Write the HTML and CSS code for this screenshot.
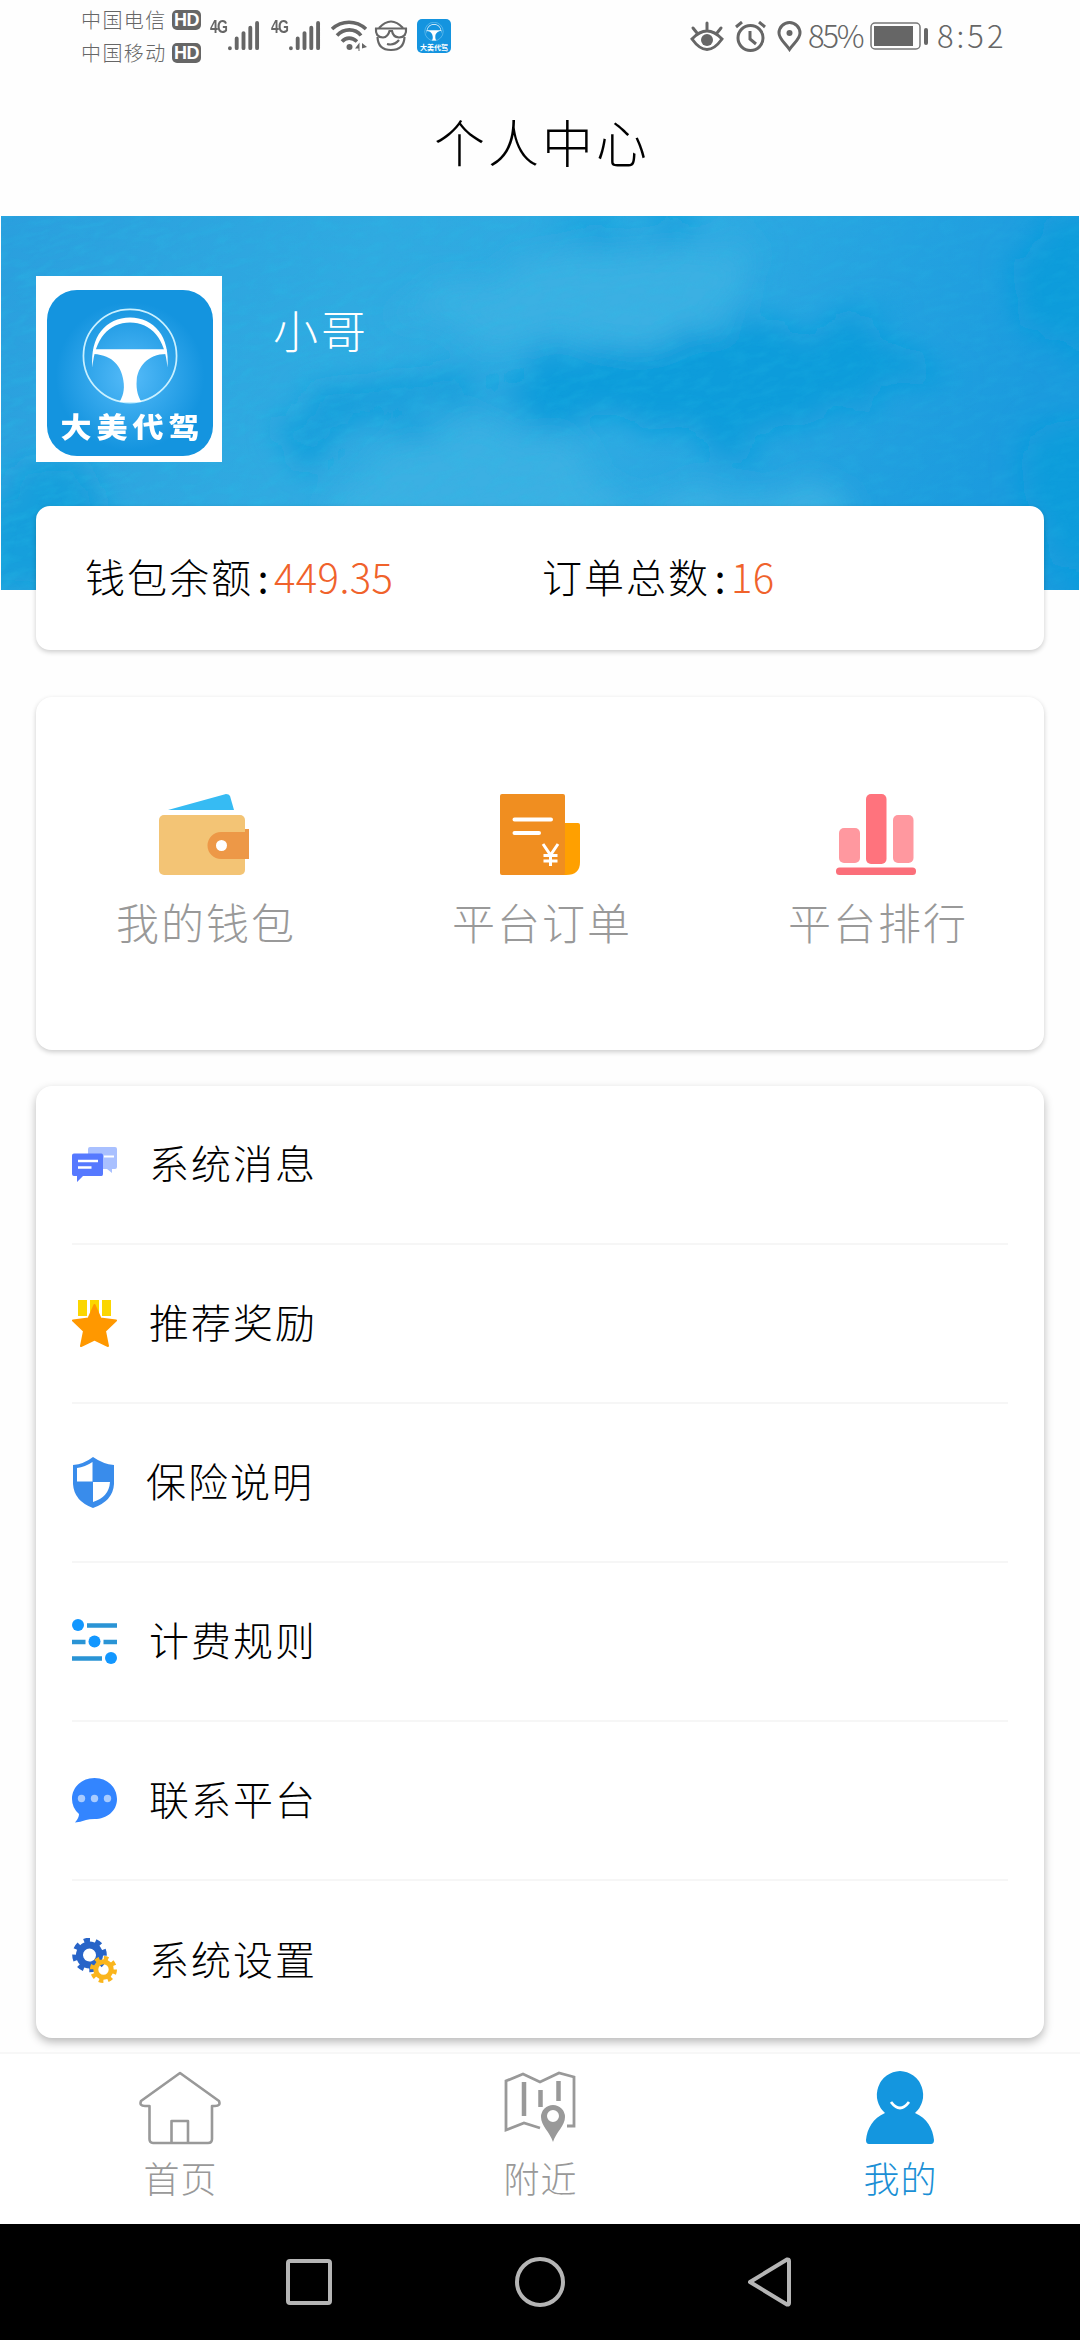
FILE: index.html
```html
<!DOCTYPE html>
<html lang="zh-CN">
<head>
<meta charset="utf-8">
<title>个人中心</title>
<link rel="stylesheet" href="styles.css">
</head>
<body>
<svg class="defs" width="0" height="0" aria-hidden="true">
  <defs>
    <symbol id="wheel" viewBox="0 0 100 100">
      <circle cx="50" cy="50" r="48.5" fill="none" stroke="#c9f0ff" stroke-width="1.8"/>
      <path d="M11 62C8 30 25 10 50 10s42 20 39 52C87 32 72 15 50 15S13 32 11 62Z" fill="#fff"/>
      <path d="M12 43H88V48C68 48 58 62 57 75 56 86 59 93 62 98H39C42 93 45 86 43 75 41 62 33 49 12 48Z" fill="#fff"/>
    </symbol>
    <symbol id="signal" viewBox="0 0 34 32">
      <path d="M3 28.5v.2M10 18.500v10M17 13v15.500M24 7.500v21M31 2.500v26" stroke="#666" stroke-width="4" stroke-linecap="round" fill="none"/>
    </symbol>
  </defs>
</svg>

<header class="status">
  <div class="carriers">
    <div class="carrier"><span>中国电信</span><b class="hd">HD</b></div>
    <div class="carrier"><span>中国移动</span><b class="hd">HD</b></div>
  </div>
  <span class="net net-a">4G</span><svg class="signal" width="33" height="32"><use href="#signal"/></svg>
  <span class="net net-b">4G</span><svg class="signal" width="33" height="32"><use href="#signal"/></svg>
  <svg class="wifi" width="38" height="32" viewBox="0 0 38 32" fill="none" stroke="#666" stroke-width="3.600">
    <path d="M2 9C12 0 26 0 36 9M7 15.500C14 8 25 8 31 15.500M12 21.500C16 17 22 17 27 21.500"/>
    <circle cx="19.500" cy="27" r="3" fill="#666" stroke="none"/>
    <path d="M29.500 22.500v8.500h-1v-2.500h-3.500l4.500-6M32 31v-8l5 4-5 1.500" fill="#666" stroke="none"/>
  </svg>
  <svg class="face" width="34" height="32" viewBox="0 0 34 32" fill="none" stroke="#666" stroke-width="2.200">
    <path d="M5 8Q17-5 29 8M3.500 17Q4 30 17 30T30.500 17M13 24Q20 26 25 20"/>
    <path d="M2 8.500H32Q33 17 25 17.500 19 17 18 11H15.500Q14 17 9 17.500 1 17 2 8.500Z"/>
  </svg>
  <div class="mini"><svg width="20" height="19"><use href="#wheel"/></svg><span>大美代驾</span></div>
  <svg class="eye" width="34" height="31" viewBox="0 0 34 31" fill="none" stroke="#666" stroke-width="3" stroke-linecap="round">
    <path d="M2 18Q17 2 32 18 17 39 2 18ZM17 2v7M3 7l4 5M31 7l-4 5"/><circle cx="17" cy="19" r="6" fill="#666" stroke="none"/>
  </svg>
  <svg class="alarm" width="31" height="31" viewBox="0 0 31 31" fill="none" stroke="#666" stroke-width="3">
    <circle cx="15.500" cy="17" r="12.500"/><path d="M15 10v8l6 5M1 6l6-5M24 1l6 5"/>
  </svg>
  <svg class="pin" width="25" height="31" viewBox="0 0 25 31" fill="none" stroke="#666" stroke-width="3">
    <path d="M12.500 28.500C8 22 2 18 2 12a10.500 10.500 0 0 1 21 0C23 18 17 22 12.500 28.500Z"/><circle cx="12.500" cy="12" r="3" fill="#666" stroke="none"/>
  </svg>
  <span class="pct">85%</span>
  <svg class="battery" width="58" height="28" viewBox="0 0 58 28">
    <rect x="1" y="1" width="49" height="26" rx="4" fill="none" stroke="#777" stroke-width="1.500"/>
    <rect x="4" y="4" width="39" height="20" fill="#666"/><rect x="54" y="6" width="4" height="17" rx="2" fill="#666"/>
  </svg>
  <span class="clock">8:52</span>
</header>

<h1 class="title">个人中心</h1>

<main>
  <section class="hero">
    <svg class="water" width="1078" height="374" viewBox="0 0 1078 374">
      <defs>
        <linearGradient id="sea" x1="0" y1="0" x2="1" y2=".15">
          <stop offset="0" stop-color="#2a9fde"/><stop offset=".35" stop-color="#30aae1"/><stop offset=".65" stop-color="#2ea9e2"/><stop offset="1" stop-color="#1b9bde"/>
        </linearGradient>
        <filter id="soft" x="-20%" y="-40%" width="140%" height="180%">
          <feTurbulence type="fractalNoise" baseFrequency=".012 .03" numOctaves="4" seed="3" result="n"/>
          <feDisplacementMap in="SourceGraphic" in2="n" scale="90" xChannelSelector="R" yChannelSelector="G"/>
          <feGaussianBlur stdDeviation="14"/>
        </filter>
        <filter id="ripple" x="0" y="0" width="100%" height="100%">
          <feTurbulence type="fractalNoise" baseFrequency=".05 .13" numOctaves="4" seed="8"/>
          <feColorMatrix values="0 0 0 0 .02  0 0 0 0 .53  0 0 0 0 .8  1.900 0 0 0 -.74"/>
        </filter>
        <linearGradient id="fade" x1="0" y1="0" x2="1" y2="0">
          <stop offset="0" stop-color="#fff"/><stop offset=".45" stop-color="#ccc"/><stop offset="1" stop-color="#777"/>
        </linearGradient>
        <mask id="calm"><rect width="1078" height="374" fill="url(#fade)"/></mask>
      </defs>
      <rect width="1078" height="374" fill="url(#sea)"/>
      <g filter="url(#soft)">
        <path d="M400 90Q520 40 760 30L700 120 470 130ZM310 310L440 200 580 235 620 300 840 270V374H290Z" fill="#3ab0e3"/>
        <path d="M500 155L700 110 860 100 940 160 800 200 740 240 620 205 560 215ZM540 0H700L660 25ZM1030 0H1110V130H1020ZM1030 210H1110V374H1040Z" fill="#119cdb"/>
        <path d="M-20 280L80 260 120 374H-20ZM270 190L380 160 500 160 390 210 280 235Z" fill="#159fdc"/>
      </g>
      <g mask="url(#calm)"><rect x="-200" y="-300" width="1500" height="1000" transform="rotate(-16 300 180)" filter="url(#ripple)" opacity=".3"/></g>
    </svg>
    <div class="profile">
      <div class="avatar">
        <div class="logo"><svg width="96" height="96"><use href="#wheel"/></svg><span>大美代驾</span></div>
      </div>
      <span class="name">小哥</span>
    </div>
  </section>

  <section class="card summary">
    <p><span>钱包余额</span><b>:</b><em>449.35</em></p>
    <p><span>订单总数</span><b>:</b><em>16</em></p>
  </section>

  <section class="card shortcuts">
    <a>
      <svg width="90" height="81" viewBox="0 0 90 81">
        <path d="M9 16L67 0Q70 0 71 2L75 16Z" fill="#36bbf3"/>
        <rect x="0" y="21" width="86" height="60" rx="5" fill="#f3c475"/>
        <path d="M90 35V65H62A13.500 13.500 0 0 1 62 38H86V35Z" fill="#ed9847"/><circle cx="62.500" cy="51.500" r="5.500" fill="#fff"/>
      </svg><span>我的钱包</span>
    </a>
    <a>
      <svg width="80" height="81" viewBox="0 0 80 81">
        <path d="M64 29H78Q80 29 80 31V68Q80 81 66 81H60Z" fill="#ffa000"/><rect width="65" height="81" rx="2" fill="#f08e20"/>
        <path d="M14.500 25.500H51M14.500 39H39" stroke="#fff" stroke-width="4" stroke-linecap="round"/>
        <path d="M43 50L50.500 61 58 50M50.500 61V72M43.500 61.500H57.500M43.500 67H57.500" fill="none" stroke="#fff" stroke-width="3"/>
      </svg><span>平台订单</span>
    </a>
    <a>
      <svg width="80" height="81" viewBox="0 0 80 81">
        <rect x="3" y="34" width="21" height="35" rx="5" fill="#ff989f"/><rect x="30" width="20.500" height="70" rx="5" fill="#ff737d"/><rect x="57" y="21" width="20.500" height="48" rx="5" fill="#ff989f"/><rect y="73.500" width="80" height="7.500" rx="3.500" fill="#fb6f7a"/>
      </svg><span>平台排行</span>
    </a>
  </section>

  <nav class="card menu">
    <a>
      <svg width="45" height="36" viewBox="0 0 45 36">
        <path d="M18 0H43Q45 0 45 2V20Q45 22 43 22H40V26L35 22H18Q16 22 16 20V2Q16 0 18 0Z" fill="#a9c0ff"/><path d="M32 9.500H42" stroke="#fff" stroke-width="2"/>
        <path d="M2 6.500H29.500Q31 6.500 31 8.500V27Q31 29 29.500 29H11L5 35V29H2Q0 29 0 27V8.500Q0 6.500 2 6.500Z" fill="#5679ff"/><path d="M6 14H26M6 20.500H19.500" stroke="#fff" stroke-width="2.600"/>
      </svg><span>系统消息</span></a>
    <a>
      <svg width="45" height="48" viewBox="0 0 45 48">
        <path d="M6 0H15V16H6ZM18 0H27V16H18ZM30 0H39V16H30Z" fill="#fbd600"/>
        <path d="M22.500 5L28.500 18.500 44 20.500 33 31 36 46 22.500 39.500 9 46 12 31 1 20.500 16.500 18.500Z" fill="#ff9800" stroke="#ff9800" stroke-width="2" stroke-linejoin="round"/>
      </svg><span>推荐奖励</span></a>
    <a>
      <svg width="42" height="51" viewBox="0 0 42 51">
        <path d="M21 0Q31 7 42 8V27Q41 44 21 51 2 44 1 27V8Q12 7 21 0Z" fill="#398ceb"/>
        <path d="M20.500 5V24.500H5V11Q13 10 20.500 5ZM21 25H38Q37 40 21 45Z" fill="#fff"/>
      </svg><span>保险说明</span></a>
    <a>
      <svg width="45" height="45" viewBox="0 0 45 45">
        <path d="M15 6.500H45M0 23H13.500M31.500 23H45M0 39.500H30" stroke="#2a94d5" stroke-width="4.500"/>
        <g fill="#1297ff"><circle cx="6" cy="6" r="6"/><circle cx="22.500" cy="22.500" r="6"/><circle cx="39" cy="39" r="6"/></g>
      </svg><span>计费规则</span></a>
    <a>
      <svg width="45" height="45" viewBox="0 0 45 45">
        <path d="M22.500 0C35 0 45 9 45 21S35 41 22.500 41Q17 41 14 42 8 44 3 44.500 7 40 7 36 0 30 0 21C0 9 10 0 22.500 0Z" fill="#3385ff"/>
        <g fill="#a8cbff"><circle cx="9.500" cy="20.500" r="3.700"/><circle cx="22.500" cy="20.500" r="3.700"/><circle cx="35.500" cy="20.500" r="3.700"/></g>
      </svg><span>联系平台</span></a>
    <a>
      <svg width="45" height="45" viewBox="0 0 45 45" fill="none">
        <g transform="rotate(22 17.500 17)"><circle cx="17.500" cy="17" r="10" stroke="#2864c8" stroke-width="7"/><circle cx="17.500" cy="17" r="14.800" stroke="#2864c8" stroke-width="5" stroke-dasharray="6 5.620"/></g>
        <circle cx="31.500" cy="31.500" r="7.700" stroke="#fab51c" stroke-width="5"/><circle cx="31.500" cy="31.500" r="11.500" stroke="#fab51c" stroke-width="4" stroke-dasharray="4.500 4.530"/>
      </svg><span>系统设置</span></a>
  </nav>
</main>

<footer class="tabs">
  <a>
    <svg width="82" height="74" viewBox="0 0 82 74" fill="none" stroke="#999" stroke-width="2.600" stroke-linejoin="round">
      <path d="M41 2L80 30Q82 35 76 35H73V68Q73 72 69 72H14Q10.500 72 10.500 68V35H6Q0 35 2 30ZM32.500 72V50H49V72"/>
    </svg><span>首页</span></a>
  <a>
    <svg width="72" height="74" viewBox="0 0 72 74" fill="none" stroke="#999" stroke-width="2.800">
      <path d="M36 57L20 52 2 59V10L19 3 36 11 55 2 70 6V55H63"/>
      <path d="M20 11V45M36.500 19V36M54.500 10V30" stroke-width="4.500"/>
      <path d="M49 71C46 61 37 55 37 46A12 12 0 0 1 61 46C61 55 52 61 49 71ZM49 39A6 6 0 1 0 49 51 6 6 0 0 0 49 39Z" fill="#999" fill-rule="evenodd" stroke="none"/>
    </svg><span>附近</span></a>
  <a class="on">
    <svg width="70" height="74" viewBox="0 0 70 74">
      <path d="M35 0A24 24 0 0 1 50 42C62 47 68 58 69 69Q69 73 66 73H4Q1 73 1 69C2 58 8 47 20 42A24 24 0 0 1 35 0Z" fill="#1496df"/><path d="M26 31Q35 43 44 31" fill="none" stroke="#fff" stroke-width="2.800"/>
    </svg><span>我的</span></a>
</footer>

<div class="system">
  <svg width="46" height="46" viewBox="0 0 46 46" fill="none"><rect x="2" y="2" width="42" height="42" rx="2" stroke="#b5b5b5" stroke-width="4"/></svg>
  <svg width="50" height="50" viewBox="0 0 50 50" fill="none"><circle cx="25" cy="25" r="23" stroke="#b5b5b5" stroke-width="4"/></svg>
  <svg width="44" height="50" viewBox="0 0 44 50" fill="none"><path d="M2 25L39 2.500Q41 2 41 4V46Q41 48 39 47.500Z" stroke="#b5b5b5" stroke-width="4" stroke-linejoin="round"/></svg>
</div>
</body>
</html>
```
FILE: styles.css
```css
* { box-sizing: border-box; }
body {
  margin: 0;
  width: 1080px;
  height: 2340px;
  overflow: hidden;
  background: #fefefe;
  color: #000;
  font-family: "Noto Sans CJK SC", sans-serif;
  font-weight: 300;
  display: flex;
  flex-direction: column;
}
svg { display: block; flex: none; }
.defs { position: absolute; }
span { white-space: nowrap; }

/* phone status bar */
.status { height: 72px; display: flex; align-items: center; padding-left: 81px; color: #666; }
.carriers { display: flex; flex-direction: column; gap: 3px; width: 120px; }
.carrier { display: flex; align-items: center; justify-content: space-between; height: 30px; font-size: 20px; letter-spacing: 1.4px; }
.hd {
  width: 29px; height: 20px; border-radius: 5px; background: #666; color: #fff;
  font: bold 18px/20px "Liberation Sans", sans-serif; text-align: center; letter-spacing: -.5px;
}
.net { font: bold 18px/17px "Liberation Sans", sans-serif; letter-spacing: -1px; width: 17px; margin-top: -17px; transform: scaleX(.78); transform-origin: left; }
.net-a { margin-left: 9px; }
.net-b { margin-left: 11px; }
.wifi { margin-left: 9px; }
.face { margin-left: 6px; }
.mini {
  margin-left: 9px; width: 34px; height: 34px; border-radius: 5px; background: #1494df; color: #fff;
  display: flex; flex-direction: column; align-items: center; justify-content: space-between; padding: 3px 0 2px;
}
.mini span { font-size: 7px; line-height: 8px; font-weight: 700; }
.eye { margin-left: 239px; }
.alarm { margin-left: 11px; }
.pin { margin-left: 11px; }
.pct { width: 54px; margin-left: 6px; font-size: 31px; letter-spacing: -2.2px; line-height: 36px; margin-top: -2px; }
.battery { margin-left: 8px; }
.clock { margin-left: 9px; font-size: 31px; letter-spacing: 3px; line-height: 36px; margin-top: -2px; }

.title {
  margin: 0; height: 144px; line-height: 138px; text-align: center;
  font-size: 51px; font-weight: 300; letter-spacing: 3px; text-indent: 4px;
}

main { height: 1836px; }

/* profile banner */
.hero { display: grid; width: 1078px; height: 374px; margin: 0 auto; overflow: hidden; }
.water, .profile { grid-area: 1 / 1; }
.profile { display: flex; padding: 60px 0 0 35px; z-index: 1; }
.avatar { width: 186px; height: 186px; background: #fff; padding: 14px 9px 6px 11px; }
.logo {
  width: 166px; height: 166px; border-radius: 30px; color: #fff;
  background: radial-gradient(circle at 50% 52%, #55bbf9, #1494df 62%);
  display: flex; flex-direction: column; align-items: center; padding-top: 18px;
}
.logo span { font-size: 31px; line-height: 34px; font-weight: 900; letter-spacing: 5px; margin: 5px 0 0 5px; transform: scaleY(.9); }
.name { margin-left: 51px; padding-top: 24px; line-height: 60px; font-size: 45px; letter-spacing: 3px; color: #fff; }

.card { margin: 0 36px; background: #fff; border-radius: 14px; box-shadow: 0 2px 5px rgba(0, 0, 0, .2); }
.summary { position: relative; margin-top: -84px; height: 144px; display: grid; grid-template-columns: 457px 1fr; align-items: center; padding: 0 0 4px 49px; }
.summary p { margin: 0; display: flex; align-items: baseline; font-size: 40px; letter-spacing: 2px; }
.summary b { width: 20px; text-align: center; letter-spacing: 0; }
.summary em { font-style: normal; color: #f0622b; letter-spacing: .4px; margin-left: 1px; }

.shortcuts { margin-top: 47px; height: 353px; display: grid; grid-template-columns: repeat(3, 1fr); border-radius: 16px; }
.shortcuts a { display: flex; flex-direction: column; align-items: center; padding-top: 97px; color: #999; }
.shortcuts span { margin: 16px 0 0 4px; font-size: 43px; line-height: 60px; letter-spacing: 2px; }

.menu { margin-top: 36px; height: 952px; padding: 0 36px; border-radius: 16px; box-shadow: 0 4px 10px rgba(0, 0, 0, .28); }
.menu a { height: 159px; display: flex; align-items: center; border-bottom: 2px solid #f6f6f6; }
.menu a:last-child { border-bottom: 0; }
.menu span { margin: 0 0 5px 32px; font-size: 40px; line-height: 56px; letter-spacing: 2px; }

/* bottom tabs */
.tabs { position: relative; height: 172px; background: #fff; border-top: 2px solid #f7f7f7; display: grid; grid-template-columns: repeat(3, 1fr); }
.tabs a { display: flex; flex-direction: column; align-items: center; padding-top: 17px; color: #999; }
.tabs span { font-size: 36px; line-height: 50px; margin: 7px 0 0 1px; letter-spacing: 1px; }
.tabs .on { color: #1a8fd5; }

.system { height: 116px; background: #000; display: flex; align-items: center; padding-left: 286px; gap: 183px; }
```
